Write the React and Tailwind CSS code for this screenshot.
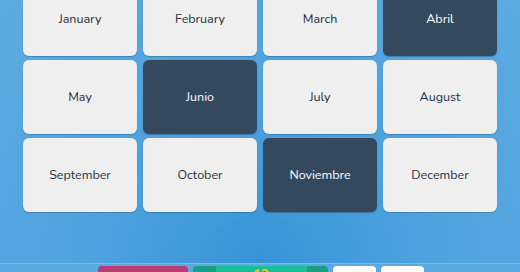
import React from "react";

const months = [
  { name: "January" },
  { name: "February" },
  { name: "March" },
  { name: "Abril", active: true },
  { name: "May" },
  { name: "Junio", active: true },
  { name: "July" },
  { name: "August" },
  { name: "September" },
  { name: "October" },
  { name: "Noviembre", active: true },
  { name: "December" },
];

const App = () => {
  return (
    <div
      className="w-[520px] h-[272px] overflow-hidden flex flex-col bg-[radial-gradient(ellipse_at_50%_100%,#3693d8_0%,#4da2de_45%,#5eabe2_100%)]"
      style={{ fontFamily: "Nunito, Lato, 'Open Sans', sans-serif" }}
    >
      <div className="h-[263px] shrink-0 overflow-hidden">
        <div className="grid grid-cols-4 gap-x-[6px] gap-y-[4px] px-[23px] mt-[-18px]">
          {months.map((m) => (
            <div
              key={m.name}
              className={
                m.active
                  ? "h-[74px] rounded-[6px] bg-[#34495e] text-white flex items-center justify-center text-[12.5px] pt-[1px] shadow-[0_1px_1px_rgba(0,0,0,0.25)]"
                  : "h-[74px] rounded-[6px] bg-[#efefef] text-[#22313f] flex items-center justify-center text-[12.5px] pt-[1px] shadow-[0_1px_1px_rgba(0,0,0,0.2)]"
              }
            >
              {m.name}
            </div>
          ))}
        </div>
      </div>
      <div className="h-[30px] shrink-0 border-t border-[#7dbbe8] bg-[#5aa9e1] flex items-start justify-center pt-[2px] gap-[5px] pl-[1px]">
        <div className="w-[90px] h-[24px] rounded-t-[4px] bg-[#b83b72]" />
        <div className="w-[135px] h-[24px] rounded-t-[4px] bg-[#1abc9c] flex overflow-hidden">
          <div className="w-[23px] bg-[#16a085]" />
          <div className="flex-1 flex justify-center pt-[3px] text-[#f1c40f] text-[13px] font-bold leading-none">
            12
          </div>
          <div className="w-[21px] bg-[#16a085]" />
        </div>
        <div className="w-[43px] h-[24px] rounded-t-[4px] bg-white" />
        <div className="w-[43px] h-[24px] rounded-t-[4px] bg-white" />
      </div>
    </div>
  );
};

export default App;
